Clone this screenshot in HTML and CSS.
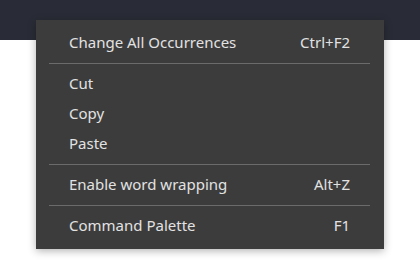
FILE: index.html
```html
<!DOCTYPE html>
<html lang="en">
<head>
  <meta charset="UTF-8">
  <title>Context Menu</title>
  <link rel="stylesheet" href="styles.css">
</head>
<body>

  <div class="titlebar"></div>
  <div class="editor"></div>

  <ul class="context-menu">
    <li class="item"><span>Change All Occurrences</span><span class="key">Ctrl+F2</span></li>
    <li class="sep"></li>
    <li class="item"><span>Cut</span></li>
    <li class="item"><span>Copy</span></li>
    <li class="item"><span>Paste</span></li>
    <li class="sep"></li>
    <li class="item"><span>Enable word wrapping</span><span class="key">Alt+Z</span></li>
    <li class="sep"></li>
    <li class="item"><span>Command Palette</span><span class="key">F1</span></li>
  </ul>

</body>
</html>
```

FILE: styles.css
```css
body {
  margin: 0;
  font-family: "Noto Sans", "Open Sans", sans-serif;
  background-color: #fff;
  position: relative;
  height: 279px;
  overflow: hidden;
}
.titlebar {
  height: 40px;
  background-color: #292c36;
}

/* Context menu floating over the editor */
.context-menu {
  position: absolute;
  top: 20px;
  left: 36px;
  width: 348px;
  margin: 0;
  padding: 8px 0;
  list-style: none;
  background-color: #3c3c3c;
  box-shadow: 0 2px 8px rgba(0, 0, 0, 0.3);
  color: #e2e2e2;
  font-size: 15px;
}
.item {
  display: flex;
  justify-content: space-between;
  line-height: 28px;
  padding: 0 33px 2px 33px;
}
.key {
  padding-right: 1px;
}
.sep {
  height: 1px;
  margin: 5px 14px 5px 13px;
  background-color: #6b6b6b;
}
```
